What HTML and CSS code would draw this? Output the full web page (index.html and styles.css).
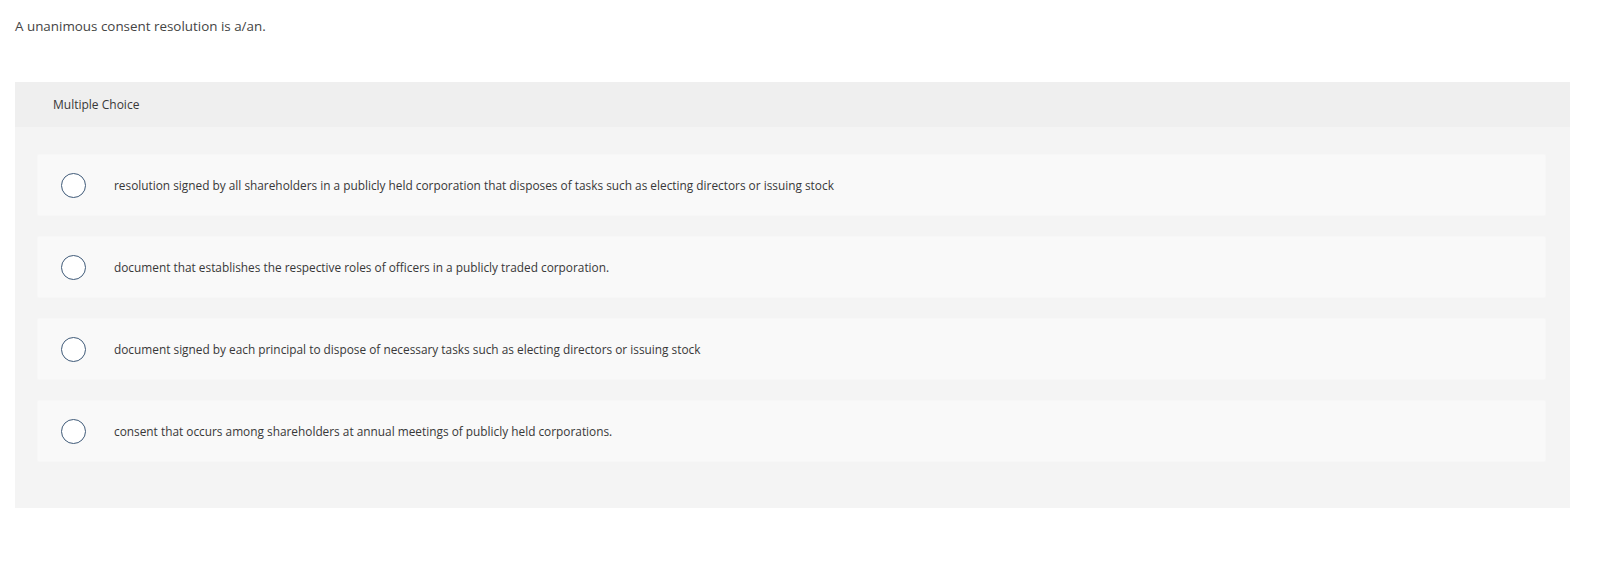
FILE: index.html
```html
<!DOCTYPE html>
<html>
<head>
<meta charset="utf-8">
<link rel="stylesheet" href="styles.css">
</head>
<body>
<p class="question">A unanimous consent resolution is a/an.</p>
<section class="panel">
  <div class="panel-head">Multiple Choice</div>
  <div class="panel-body">
    <div class="option"><span class="radio"></span><span class="label">resolution signed by all shareholders in a publicly held corporation that disposes of tasks such as electing directors or issuing stock</span></div>
    <div class="option"><span class="radio"></span><span class="label">document that establishes the respective roles of officers in a publicly traded corporation.</span></div>
    <div class="option"><span class="radio"></span><span class="label">document signed by each principal to dispose of necessary tasks such as electing directors or issuing stock</span></div>
    <div class="option"><span class="radio"></span><span class="label">consent that occurs among shareholders at annual meetings of publicly held corporations.</span></div>
  </div>
</section>
</body>
</html>
```

FILE: styles.css
```css
html, body {
  margin: 0;
  padding: 0;
  background: #ffffff;
}
body {
  font-family: "Open Sans", "Liberation Sans", sans-serif;
  color: #333333;
  padding: 0 39px 0 15px;
}
.question {
  margin: 0;
  padding-top: 16px;
  font-size: 13.4px;
  line-height: 20px;
  color: #444444;
}
.panel {
  margin-top: 46px;
  width: 1555px;
  background: #f4f4f4;
}
.panel-head {
  height: 45px;
  display: flex;
  align-items: center;
  padding-left: 38px;
  padding-bottom: 1px;
  box-sizing: border-box;
  background: #efefef;
  font-size: 12px;
  color: #383838;
}
.panel-body {
  display: flex;
  flex-direction: column;
  gap: 22px;
  padding: 28px 25px 47px 23px;
}
.option {
  height: 60px;
  display: flex;
  align-items: center;
  padding-left: 23px;
  background: #f9f9f9;
  box-shadow: 0 0 2px rgba(255,255,255,0.9);
}
.radio {
  width: 23px;
  height: 23px;
  border: 1.3px solid #3f5a78;
  border-radius: 50%;
  background: #ffffff;
  flex: none;
}
.label {
  margin-left: 28px;
  padding-bottom: 1px;
  font-size: 11.85px;
  color: #383838;
}
```
